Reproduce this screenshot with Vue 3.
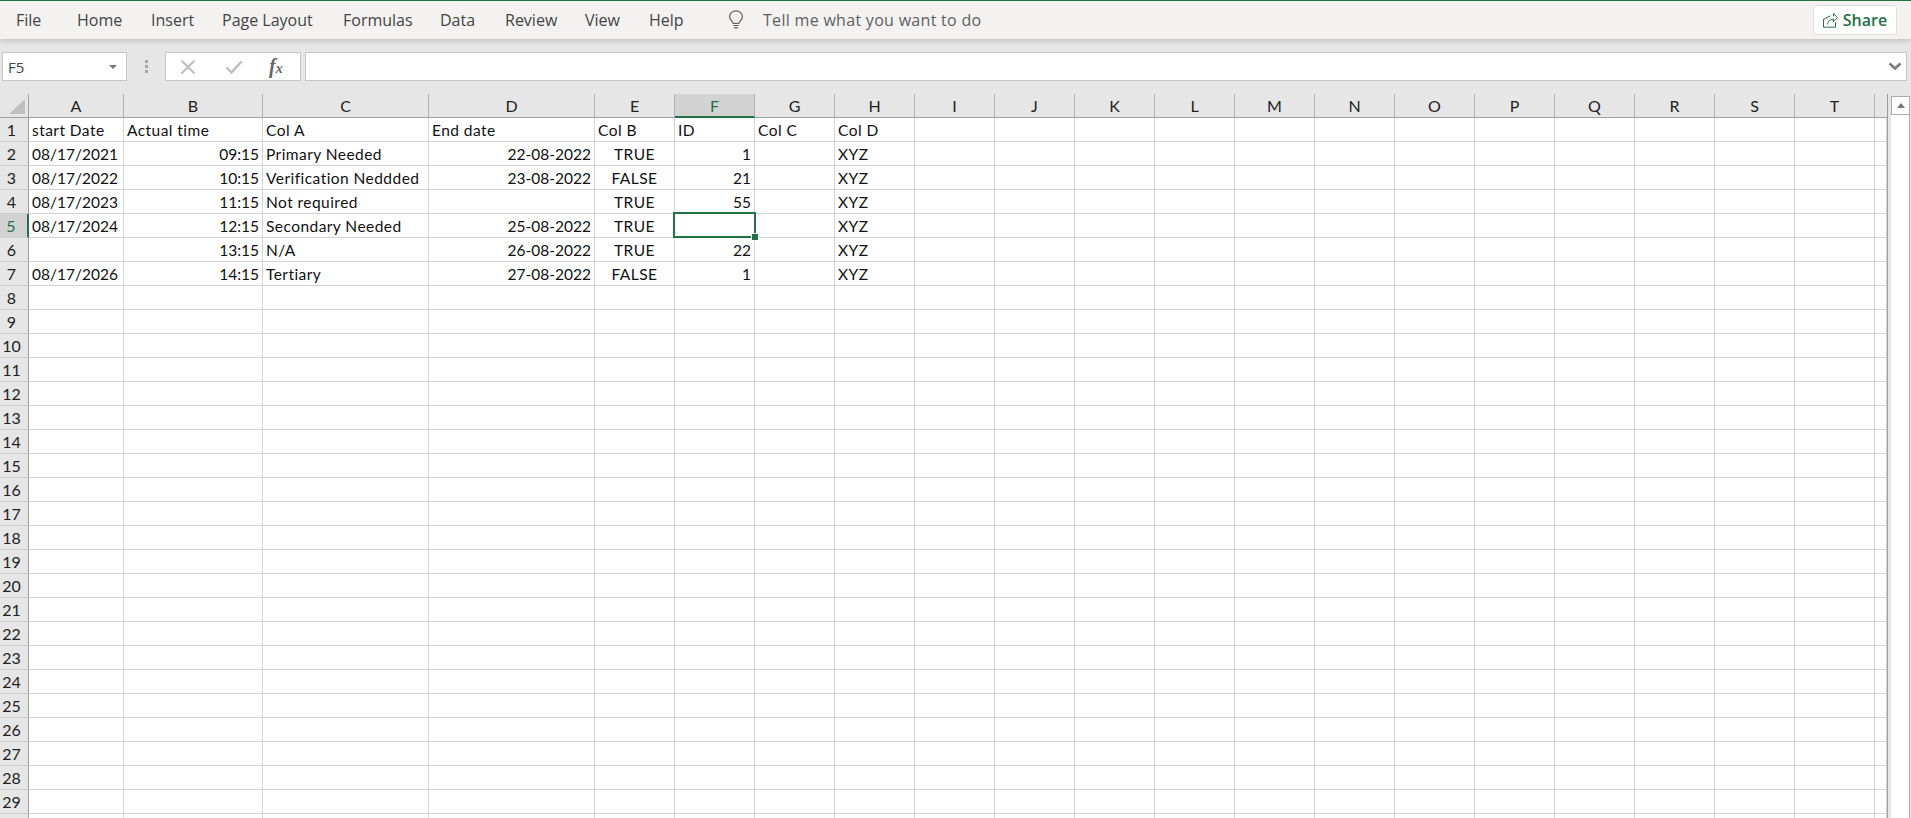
<script setup>
const cols = 'ABCDEFGHIJKLMNOPQRST'.split('')
const data = [
  ['start Date', 'Actual time', 'Col A', 'End date', 'Col B', 'ID', 'Col C', 'Col D'],
  ['08/17/2021', '09:15', 'Primary Needed', '22-08-2022', 'TRUE', '1', '', 'XYZ'],
  ['08/17/2022', '10:15', 'Verification Neddded', '23-08-2022', 'FALSE', '21', '', 'XYZ'],
  ['08/17/2023', '11:15', 'Not required', '', 'TRUE', '55', '', 'XYZ'],
  ['08/17/2024', '12:15', 'Secondary Needed', '25-08-2022', 'TRUE', '', '', 'XYZ'],
  ['', '13:15', 'N/A', '26-08-2022', 'TRUE', '22', '', 'XYZ'],
  ['08/17/2026', '14:15', 'Tertiary', '27-08-2022', 'FALSE', '1', '', 'XYZ']
]
const rows = Array.from({ length: 30 }, (_, i) => i + 1)
const tabs = ['File', 'Home', 'Insert', 'Page Layout', 'Formulas', 'Data', 'Review', 'View', 'Help']
function val(r, c) {
  return data[r] && data[r][c] ? data[r][c] : ''
}
function cellClass(r, c) {
  const v = val(r, c)
  const out = []
  if (/^[\d/:-]+$/.test(v)) out.push('num')
  if (r > 0 && (c === 1 || c === 3 || c === 5)) out.push('right')
  if (r > 0 && c === 4) out.push('center')
  return out
}
</script>

<template>
  <div class="app">
    <header class="ribbon">
      <nav class="tabs">
        <span v-for="t in tabs" :key="t" class="tab">{{ t }}</span>
      </nav>
      <svg class="bulb" width="16" height="20" viewBox="0 0 16 20" fill="none" stroke="#605e5c" stroke-width="1.200">
        <path d="M5.200 13.500c0-2-3.700-3.300-3.700-7A6.500 6.500 0 0 1 8 .8a6.500 6.500 0 0 1 6.500 5.700c0 3.700-3.700 5-3.700 7z" />
        <path d="M5.300 15.500h5.400M6 17.800h4" />
      </svg>
      <span class="tell">Tell me what you want to do</span>
      <button class="share">
        <svg width="15" height="15" viewBox="0 0 15 15" fill="none" stroke="#217346" stroke-width="1">
          <path d="M7.500 2.800L.5 6.200v8h12V9.500" />
          <path d="M4.500 11.500c.3-3.200 2.700-5.300 6-5.300v2.600l4-4.200-4-4v2.700" />
        </svg>
        <span>Share</span>
      </button>
    </header>

    <section class="fbar">
      <div class="namebox">
        <span>F5</span>
        <i class="caret"></i>
      </div>
      <div class="dots"><i></i><i></i><i></i></div>
      <div class="fxbox">
        <svg width="16" height="16" viewBox="0 0 16 16" stroke="#bdbdbd" stroke-width="2" fill="none">
          <path d="M1.500 1.500l13 13M14.500 1.500l-13 13" />
        </svg>
        <svg width="18" height="16" viewBox="0 0 18 16" stroke="#bdbdbd" stroke-width="2.400" fill="none">
          <path d="M1.500 8.500l5 5 10-11" />
        </svg>
        <span class="fx">f<small>x</small></span>
      </div>
      <div class="input">
        <svg width="14" height="9" viewBox="0 0 14 9" fill="none" stroke="#7a7a7a" stroke-width="2.600">
          <path d="M1.500 1.500L7 6.500l5.500-5" />
        </svg>
      </div>
    </section>

    <main class="sheet">
      <div class="grid">
        <div class="corner">
          <svg width="16" height="15" viewBox="0 0 16 15"><path d="M16 0v15H0z" fill="#bfbfbf" /></svg>
        </div>
        <div v-for="c in cols" :key="c" class="ch" :class="{ sel: c === 'F' }">{{ c }}</div>
        <div class="ch end"></div>

        <template v-for="r in rows" :key="r">
          <div class="rh" :class="{ sel: r === 5 }">{{ r < 30 ? r : '' }}</div>
          <div
            v-for="(c, ci) in cols"
            :key="c"
            class="cell"
            :class="cellClass(r - 1, ci)"
          >
            {{ val(r - 1, ci) }}
            <div v-if="r === 5 && c === 'F'" class="active"><i class="handle"></i></div>
          </div>
          <div class="cell"></div>
        </template>
      </div>

      <aside class="scroll">
        <div class="up"><i></i></div>
        <div class="track"></div>
      </aside>
    </main>
  </div>
</template>

<style>
html, body { margin: 0; height: 100%; overflow: hidden; background: #fff; }
</style>

<style scoped>
.app {
  width: 1911px;
  height: 818px;
  overflow: hidden;
  display: flex;
  flex-direction: column;
  background: #e6e6e6;
}

.ribbon {
  flex: 0 0 39px;
  box-sizing: border-box;
  display: flex;
  align-items: center;
  background: #f3f2f1;
  border-top: 1px solid #217346;
  box-shadow: 0 2px 6px rgba(0, 0, 0, 0.16);
  font-family: "Open Sans", sans-serif;
  font-size: 16px;
  color: #444;
  position: relative;
  z-index: 1;
  padding-left: 16px;
  padding-right: 14px;
}
.tabs {
  display: grid;
  grid-template-columns: 61px 74px 71px 121px 97px 65px 80px 64px 79px;
}
.tab { white-space: nowrap; }
.bulb { margin-right: 19px; }
.tell { color: #5f5f5f; letter-spacing: 0.3px; }
.share {
  margin-left: auto;
  width: 84px;
  height: 30px;
  box-sizing: border-box;
  display: flex;
  align-items: center;
  justify-content: center;
  gap: 5px;
  background: #fff;
  border: 1px solid #e1dfdd;
  border-radius: 3px;
  padding: 0;
  color: #217346;
  font-family: "Open Sans", sans-serif;
  font-size: 16px;
  font-weight: 600;
}

.fbar {
  flex: 0 0 55px;
  box-sizing: border-box;
  display: flex;
  align-items: flex-start;
  padding: 13px 4px 0 2px;
  font-family: "Open Sans", sans-serif;
}
.namebox, .fxbox, .input {
  height: 29px;
  box-sizing: border-box;
  background: #fff;
  border: 1px solid #c6c6c6;
  display: flex;
  align-items: center;
}
.namebox {
  width: 125px;
  justify-content: space-between;
  padding: 0 9px 0 5px;
  font-size: 15px;
  color: #444;
}
.caret {
  width: 0;
  height: 0;
  border-left: 4px solid transparent;
  border-right: 4px solid transparent;
  border-top: 4px solid #777;
}
.dots {
  width: 38px;
  height: 29px;
  display: flex;
  flex-direction: column;
  align-items: center;
  justify-content: center;
  gap: 2px;
}
.dots i { width: 3px; height: 3px; background: #a6a6a6; }
.fxbox {
  width: 136px;
  padding-left: 14px;
  gap: 29px;
}
.fx {
  font-family: "Liberation Serif", serif;
  font-style: italic;
  font-weight: 700;
  font-size: 20px;
  color: #666;
  margin-left: -3px;
}
.fx small { font-size: 14px; }
.input {
  margin-left: 4px;
  flex: 1;
  justify-content: flex-end;
  padding-right: 4px;
}

.sheet {
  flex: 1;
  display: flex;
  min-height: 0;
}
.grid {
  width: 1888px;
  box-sizing: border-box;
  flex: none;
  border-right: 1px solid #9e9e9e;
  display: grid;
  grid-template-columns: 29px 95px 139px 166px 166px repeat(16, 80px) 12px;
  grid-auto-rows: 24px;
  overflow: hidden;
  font-family: Lato, sans-serif;
  font-size: 15.500px;
  letter-spacing: 0.45px;
  color: #111;
  line-height: 24px;
}
.corner, .ch, .rh, .cell { box-sizing: border-box; min-width: 0; }
.corner {
  background: #e6e6e6;
  border-right: 1px solid #9e9e9e;
  border-bottom: 1px solid #9e9e9e;
  padding: 5px 0 0 9px;
  line-height: 0;
}
.ch {
  background: #e6e6e6;
  border-right: 1px solid #b1b1b1;
  border-bottom: 1px solid #9e9e9e;
  text-align: center;
  color: #222;
  font-size: 16px;
  letter-spacing: 0;
}
.ch.end { border-right: 0; }
.ch.sel {
  background: #d2d2d2;
  border-bottom: 2px solid #217346;
  color: #217346;
}
.rh {
  background: #e6e6e6;
  border-right: 1px solid #9e9e9e;
  border-bottom: 1px solid #cfcfcf;
  text-align: center;
  font-size: 16px;
  letter-spacing: 0;
  color: #222;
  padding-right: 5px;
}
.rh.sel {
  background: #d2d2d2;
  border-right: 2px solid #217346;
  color: #217346;
}
.cell {
  background: #fff;
  border-right: 1px solid #d4d4d4;
  border-bottom: 1px solid #d4d4d4;
  padding: 0 3px;
  white-space: nowrap;
  position: relative;
}
.cell.num { letter-spacing: 0; font-size: 15.500px; }
.cell.right { text-align: right; }
.cell.center { text-align: center; }
.active {
  position: absolute;
  left: -2px;
  top: -2px;
  width: 83px;
  height: 26px;
  box-sizing: border-box;
  border: 2px solid #217346;
  z-index: 2;
}
.handle {
  position: absolute;
  right: -4px;
  bottom: -4px;
  width: 6px;
  height: 6px;
  background: #217346;
  border: 1px solid #fff;
  box-sizing: content-box;
  margin: -1px;
}

.scroll {
  flex: 1;
  display: flex;
  flex-direction: column;
  padding: 2px 1px 0 3px;
  box-sizing: border-box;
}
.up {
  flex: 0 0 19px;
  box-sizing: border-box;
  background: #fff;
  border: 1px solid #ababab;
  display: flex;
  align-items: center;
  justify-content: center;
}
.up i {
  width: 0;
  height: 0;
  border-left: 4px solid transparent;
  border-right: 4px solid transparent;
  border-bottom: 5px solid #777;
}
.track {
  flex: 1;
  background: #fff;
  border-right: 1px solid #ababab;
}
</style>
